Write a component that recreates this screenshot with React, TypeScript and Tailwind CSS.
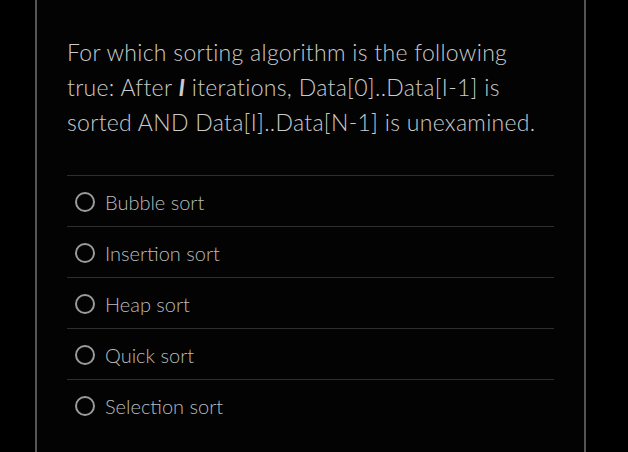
const options = [
  'Bubble sort',
  'Insertion sort',
  'Heap sort',
  'Quick sort',
  'Selection sort',
];

export default function App() {
  return (
    <div
      className="h-[452px] w-full overflow-hidden bg-black"
      style={{ fontFamily: 'Lato, "Open Sans", sans-serif' }}
    >
      <div className="ml-[35px] h-full w-[551px] border-x-2 border-[#555555] bg-[#030303] px-[30px] pt-[35px]">
        {/* Question */}
        <p className="text-[23px] font-light leading-[35px] tracking-[0.3px] text-[#cbcbcb]">
          For which sorting algorithm is the following true: After{' '}
          <i className="font-bold">I</i> iterations, Data[0]..Data[I-1] is
          sorted AND Data[I]..Data[N-1] is unexamined.
        </p>

        {/* Answers */}
        <div className="mt-[35px]">
          {options.map((opt) => (
            <div
              key={opt}
              className="flex h-[51px] items-center gap-[10px] border-t border-[#2e2e2e] pl-[8px] pt-[2px]"
            >
              <span className="h-[20px] w-[20px] flex-shrink-0 rounded-full border-2 border-[#9b9b9b]" />
              <span className="text-[20px] font-light text-[#b9bbbd]">{opt}</span>
            </div>
          ))}
        </div>
      </div>
    </div>
  );
}
